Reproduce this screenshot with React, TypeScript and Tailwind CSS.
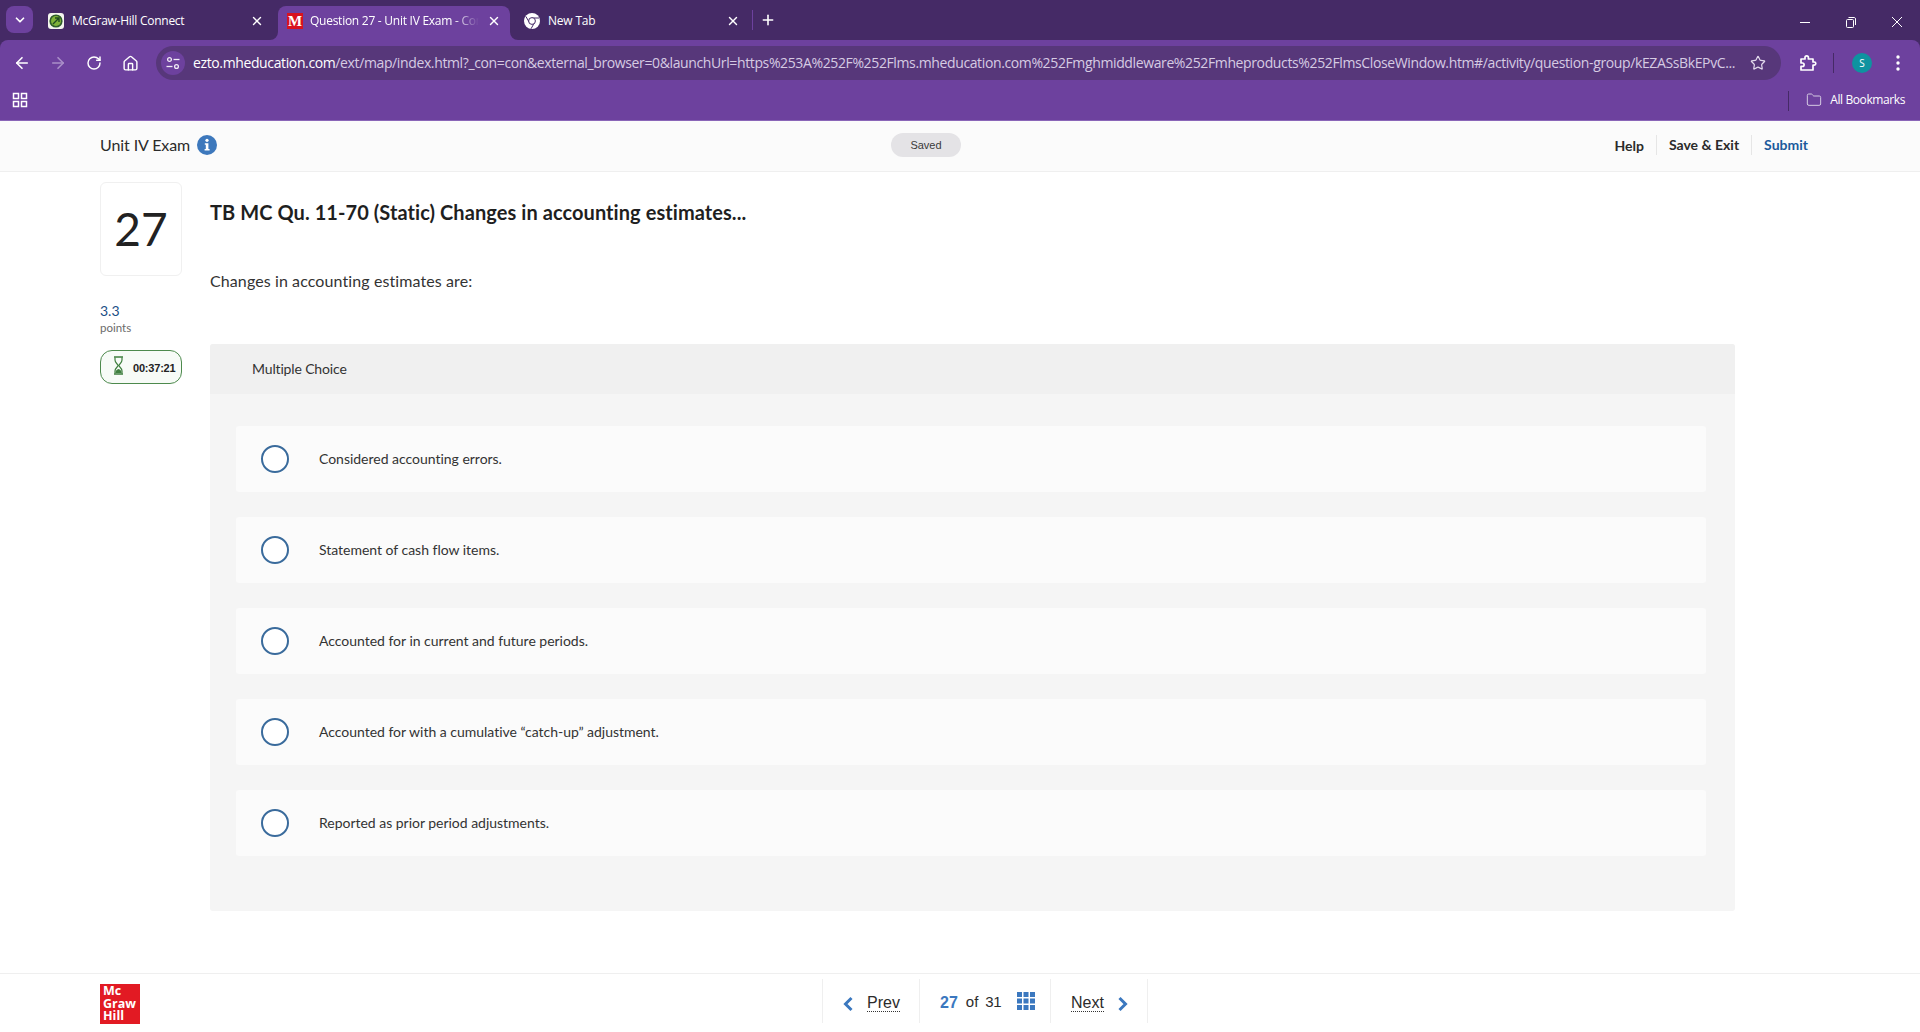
import React from "react";
import { ArrowLeft, ArrowRight, RotateCw, Home, Star, X, Plus, ChevronDown, Folder } from "lucide-react";

const OPTIONS = [
  "Considered accounting errors.",
  "Statement of cash flow items.",
  "Accounted for in current and future periods.",
  "Accounted for with a cumulative “catch-up” adjustment.",
  "Reported as prior period adjustments.",
];

function ConnectIcon() {
  return (
    <svg width="16" height="16" viewBox="0 0 16 16">
      <rect width="16" height="16" rx="3" fill="#f4f6ee" />
      <circle cx="8" cy="8" r="6.6" fill="#2e5d2a" />
      <circle cx="8" cy="8" r="5" fill="#7fb239" />
      <path d="M5 11 L11 5 M7 5 H11 V9" stroke="#1f4a22" strokeWidth="1.4" fill="none" />
    </svg>
  );
}

function ChromeIcon() {
  return (
    <svg width="16" height="16" viewBox="0 0 16 16">
      <circle cx="8" cy="8" r="8" fill="#ffffff" />
      <path d="M8 5 H15 M5.4 9.5 L1.9 3.5 M10.6 9.5 L7 15.8" stroke="#452a66" strokeWidth="1" />
      <circle cx="8" cy="8" r="3.4" fill="#ffffff" stroke="#452a66" strokeWidth="1" />
    </svg>
  );
}

function TuneIcon() {
  return (
    <svg width="16" height="16" viewBox="0 0 16 16" fill="none" stroke="#f1ecf6" strokeWidth="1.3">
      <circle cx="4.5" cy="4.5" r="1.9" />
      <path d="M8.5 4.5 H14.5" />
      <circle cx="11.5" cy="11.5" r="1.9" />
      <path d="M1.5 11.5 H7.5" />
    </svg>
  );
}

function PuzzleIcon() {
  return (
    <svg width="18" height="18" viewBox="0 0 18 18" fill="none" stroke="#ffffff" strokeWidth="1.7" strokeLinejoin="round">
      <path d="M2 5 H6 V3.6 A1.7 1.7 0 0 1 9.4 3.6 V5 H14 V8 H15.2 A1.6 1.6 0 0 1 15.2 11.2 H14 V16 H2 V12.4 H3.4 A1.6 1.6 0 0 0 3.4 9 H2 Z" />
    </svg>
  );
}

function AppsIcon() {
  return (
    <svg width="16" height="16" viewBox="0 0 16 16" fill="none" stroke="#ffffff" strokeWidth="1.5">
      <rect x="1.5" y="1.5" width="5" height="5" />
      <rect x="9.5" y="1.5" width="5" height="5" />
      <rect x="1.5" y="9.5" width="5" height="5" />
      <rect x="9.5" y="9.5" width="5" height="5" />
    </svg>
  );
}

function TabCorner({ side }: { side: "left" | "right" }) {
  return (
    <svg
      width="8"
      height="8"
      viewBox="0 0 8 8"
      className={side === "left" ? "absolute bottom-0 -left-2" : "absolute bottom-0 -right-2"}
    >
      <path d={side === "left" ? "M8 0 V8 H0 A8 8 0 0 0 8 0 Z" : "M0 0 V8 H8 A8 8 0 0 1 0 0 Z"} fill="#6d419e" />
    </svg>
  );
}

function ChromeBar() {
  return (
    <div className="h-[121px] bg-[#452a66] border-b border-[#8a66b8] font-['Open_Sans',sans-serif] text-white">
      <div className="flex h-10 items-end pl-[6px]">
        <div className="mb-[7px] flex h-[27px] w-[27px] items-center justify-center rounded-lg bg-[#6d419e]">
          <ChevronDown size={14} strokeWidth={3} />
        </div>
        <div className="ml-[15px] flex h-[34px] w-[230px] items-center pb-[4px]">
          <ConnectIcon />
          <span className="ml-2 text-[12px] tracking-[-0.26px]">McGraw-Hill Connect</span>
          <X size={14} strokeWidth={2.4} className="ml-auto mr-[14px]" />
        </div>
        <div className="relative flex h-[34px] w-[232px] items-center rounded-t-lg bg-[#6d419e] pl-[9px] pb-[4px]">
          <TabCorner side="left" />
          <TabCorner side="right" />
          <div className="flex h-4 w-4 items-center justify-center bg-[#d8121f] text-[15px] leading-none font-bold font-['Liberation_Serif',serif]">
            M
          </div>
          <span className="ml-[7px] w-[169px] overflow-hidden whitespace-nowrap text-[12px] tracking-[-0.26px] leading-5 [mask-image:linear-gradient(to_right,black_85%,transparent)]">
            Question 27 - Unit IV Exam - Connect
          </span>
          <X size={14} strokeWidth={2.4} className="ml-[8px]" />
        </div>
        <div className="flex h-[34px] w-[231px] items-center pl-[14px] pb-[4px]">
          <ChromeIcon />
          <span className="ml-2 text-[12px] tracking-[-0.2px]">New Tab</span>
          <X size={14} strokeWidth={2.4} className="ml-auto mr-[1px]" />
        </div>
        <div className="mb-[10px] ml-[11px] h-[20px] w-px bg-[#6d419e]" />
        <Plus size={16} strokeWidth={2.4} className="mb-[12px] ml-[7px]" />
        <div className="mb-[12px] ml-auto flex items-center">
          <svg width="12" height="12" viewBox="0 0 12 12" className="mr-[34px]" stroke="#fff" strokeWidth="1">
            <path d="M1 6.5 H11" />
          </svg>
          <svg width="12" height="12" viewBox="0 0 12 12" className="mr-[34px]" stroke="#fff" strokeWidth="1" fill="none">
            <rect x="1.5" y="3.5" width="7" height="8" rx="1" />
            <path d="M3.5 1.5 H9.5 A1.5 1.5 0 0 1 10.5 3 V9" />
          </svg>
          <svg width="12" height="12" viewBox="0 0 12 12" className="mr-[17px]" stroke="#fff" strokeWidth="1">
            <path d="M1 1 L11 11 M11 1 L1 11" />
          </svg>
        </div>
      </div>
      <div className="h-20 rounded-t-lg bg-[#6d419e]">
        <div className="flex h-10 items-start pt-[6px]">
          <div className="flex h-[34px] w-[156px] items-center">
            <ArrowLeft size={18} strokeWidth={2.2} className="ml-[13px]" />
            <ArrowRight size={18} strokeWidth={2.2} className="ml-[18px] text-[#a98fc8]" />
            <RotateCw size={16} strokeWidth={2.2} className="ml-[19px]" />
            <Home size={17} strokeWidth={2} className="ml-[20px]" />
          </div>
          <div className="flex h-[34px] w-[1625px] items-center rounded-full bg-[#57377a]">
            <div className="ml-[5px] flex h-6 w-6 items-center justify-center rounded-full bg-[#6d419e]">
              <TuneIcon />
            </div>
            <span className="ml-2 w-[1545px] whitespace-nowrap overflow-hidden text-[14px] leading-5 tracking-[-0.375px] text-[#d6cbe3]">
              <span className="text-white">ezto.mheducation.com</span>
              /ext/map/index.html?_con=con&amp;external_browser=0&amp;launchUrl=https%253A%252F%252Flms.mheducation.com%252Fmghmiddleware%252Fmheproducts%252FlmsCloseWindow.htm#/activity/question-group/kEZASsBkEPvC...
            </span>
            <Star size={16} strokeWidth={1.8} className="ml-[12px] text-[#e2d9ec]" />
          </div>
          <div className="flex h-[34px] flex-1 items-center">
            <div className="ml-[18px]"><PuzzleIcon /></div>
            <div className="ml-[16px] h-5 w-px bg-[#452a66]" />
            <div className="ml-[18px] flex h-5 w-5 items-center justify-center rounded-full bg-[#0e93a0] text-[10px]">S</div>
            <svg width="4" height="18" viewBox="0 0 4 18" className="ml-[24px]" fill="#fff">
              <circle cx="2" cy="3" r="1.7" />
              <circle cx="2" cy="9" r="1.7" />
              <circle cx="2" cy="15" r="1.7" />
            </svg>
          </div>
        </div>
        <div className="flex h-10 items-start pt-[12px] pl-3">
          <AppsIcon />
          <div className="ml-auto mt-[-1px] h-[20px] w-px bg-[#452a66]" />
          <Folder size={16} strokeWidth={1.5} className="ml-[17px] text-[#d6cbe3]" />
          <span className="ml-2 mr-[15px] text-[12px] leading-4 tracking-[-0.4px]">All Bookmarks</span>
        </div>
      </div>
    </div>
  );
}

function ExamHeader() {
  return (
    <div className="flex h-[51px] items-center border-b border-[#efefef] bg-[#fbfbfb] pb-[2px] pl-[100px] pr-[112px] font-['Lato',sans-serif] text-[#2b2b2b]">
      <div className="flex w-[791px] items-center">
        <span className="text-[16px] tracking-[-0.1px]">Unit IV Exam</span>
        <svg width="20" height="20" viewBox="0 0 20 20" className="ml-[7px]">
          <circle cx="10" cy="10" r="10" fill="#3d78bc" />
          <circle cx="10" cy="5.3" r="1.6" fill="#fff" />
          <path d="M7.8 8.2 H11.4 V14 H12.6 V15.6 H7.6 V14 H8.8 V9.8 H7.8 Z" fill="#fff" />
        </svg>
      </div>
      <div className="flex h-6 w-[70px] items-center justify-center rounded-full bg-[#e4e3e6] text-[11px] text-[#3a3a3a] font-['Liberation_Sans',sans-serif]">
        Saved
      </div>
      <div className="ml-auto flex items-center text-[14px] font-bold">
        <span className="pr-3">Help</span>
        <span className="border-l border-[#e6e6e6] px-3 leading-5">Save &amp; Exit</span>
        <span className="border-l border-[#e6e6e6] pl-3 leading-5 text-[#1b5a9c]">Submit</span>
      </div>
    </div>
  );
}

function Hourglass() {
  return (
    <svg width="11" height="19" viewBox="0 0 11 19" fill="none" stroke="#3f7f3f" strokeWidth="1.2" className="mb-[4px]">
      <path d="M1 1 H10 M1 18 H10" strokeWidth="1.4" />
      <path d="M2 1.5 V4 C2 7 5 8 5 9.5 C5 11 2 12 2 15 V17.5 M9 1.5 V4 C9 7 6 8 6 9.5 C6 11 9 12 9 15 V17.5" />
      <path d="M2.4 17 C2.4 14.5 4 13.5 5.5 13 C7 13.5 8.6 14.5 8.6 17 Z" fill="#3f7f3f" stroke="none" />
    </svg>
  );
}

function Sidebar() {
  return (
    <div className="w-[82px] shrink-0 pt-[10px]">
      <div className="flex h-[94px] items-center justify-center rounded-md border border-[#f0f0f0] text-[46px] leading-none text-[#222]">
        27
      </div>
      <div className="mt-[25px] text-[14px] font-normal leading-5 text-[#1c4f86]">3.3</div>
      <div className="text-[11.5px] leading-[14px] text-[#6b6b6b]">points</div>
      <div className="mt-[15px] flex h-[34px] items-center rounded-[12px] border border-[#4d8a4d] bg-[#f7fbf7] pl-[12px]">
        <Hourglass />
        <span className="ml-[9px] mt-[2px] text-[11px] font-bold tracking-[-0.2px] text-[#222] font-['Liberation_Sans',sans-serif]">
          00:37:21
        </span>
      </div>
    </div>
  );
}

function Question() {
  return (
    <div className="ml-[28px] w-[1525px] pt-[28px]">
      <h1 className="text-[20px] font-bold leading-[24px] tracking-[0.07px] text-[#1f1f1f]">
        TB MC Qu. 11-70 (Static) Changes in accounting estimates...
      </h1>
      <p className="mt-[45px] text-[16px] leading-[24px] tracking-[0.1px] text-[#333]">Changes in accounting estimates are:</p>
      <div className="mt-[51px] overflow-hidden rounded-[3px] bg-[#f5f5f5]">
        <div className="flex h-[50px] items-center bg-[#f0f0f0] pb-[2px] pl-[42px] text-[14px] tracking-[-0.15px] text-[#333]">Multiple Choice</div>
        <div className="flex flex-col gap-[25px] pt-[32px] pb-[55px] pl-[26px] pr-[29px]">
          {OPTIONS.map((o) => (
            <div key={o} className="flex h-[66px] items-center rounded-[3px] bg-[#fbfbfb] pl-[25px]">
              <div className="h-7 w-7 rounded-full border-2 border-[#3a6b9c] bg-white" />
              <span className="mb-[2px] ml-[30px] text-[14px] tracking-[-0.02px] text-[#333]">{o}</span>
            </div>
          ))}
        </div>
      </div>
    </div>
  );
}

function Footer() {
  return (
    <div className="flex h-[59px] border-t border-[#efefef] pl-[100px] font-['Liberation_Sans',sans-serif] text-[#2b2b2b]">
      <div className="mt-[10px] h-10 w-10 bg-[#e21a23] pl-[3px] pt-[1px] text-[12.5px] font-bold leading-[12.5px] text-white font-['Open_Sans',sans-serif]">
        Mc<br />Graw<br />Hill
      </div>
      <div className="ml-[682px] mt-[5px] flex h-[44px] border-r border-[#efefef] text-[16px]">
        <div className="flex w-[97px] items-center border-l border-[#efefef] pl-[20px] pt-[5px]">
          <svg width="10" height="16" viewBox="0 0 10 16" fill="none" stroke="#3b78bf" strokeWidth="3">
            <path d="M8.5 2 L2.5 8 L8.5 14" />
          </svg>
          <span className="ml-[14px] border-b border-dotted border-[#333] leading-[16px]">Prev</span>
        </div>
        <div className="flex w-[131px] items-center border-l border-[#efefef] pl-[20px] pt-[3px]">
          <span className="font-bold text-[#3b78bf]">27</span>
          <span className="ml-[8px] text-[15px]">of</span>
          <span className="ml-[7px] text-[15px] tracking-[-0.3px]">31</span>
          <svg width="18" height="18" viewBox="0 0 18 18" fill="#3b78bf" className="mb-[3px] ml-[16px]">
            <rect x="0" y="0" width="5" height="5" />
            <rect x="6.5" y="0" width="5" height="5" />
            <rect x="13" y="0" width="5" height="5" />
            <rect x="0" y="6.5" width="5" height="5" />
            <rect x="6.5" y="6.5" width="5" height="5" />
            <rect x="13" y="6.5" width="5" height="5" />
            <rect x="0" y="13" width="5" height="5" />
            <rect x="6.5" y="13" width="5" height="5" />
            <rect x="13" y="13" width="5" height="5" />
          </svg>
        </div>
        <div className="flex w-[97px] items-center border-l border-[#efefef] pl-[20px] pt-[5px]">
          <span className="border-b border-dotted border-[#333] leading-[16px]">Next</span>
          <svg width="10" height="16" viewBox="0 0 10 16" fill="none" stroke="#3b78bf" strokeWidth="3" className="ml-[14px]">
            <path d="M1.5 2 L7.5 8 L1.5 14" />
          </svg>
        </div>
      </div>
    </div>
  );
}

export default function App() {
  return (
    <div className="flex h-screen flex-col overflow-hidden bg-white">
      <ChromeBar />
      <ExamHeader />
      <div className="flex flex-1 pl-[100px] font-['Lato',sans-serif]">
        <Sidebar />
        <Question />
      </div>
      <Footer />
    </div>
  );
}
